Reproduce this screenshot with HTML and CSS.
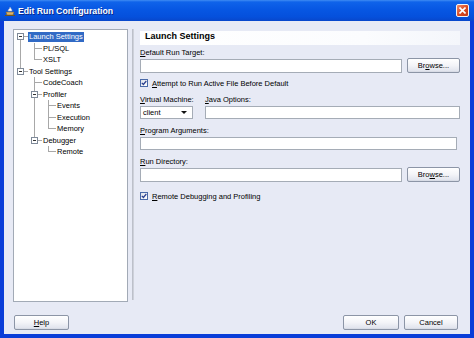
FILE: index.html
```html
<!DOCTYPE html>
<html>
<head>
    <title>Edit Run Configuration</title>
    <link rel="stylesheet" href="styles.css">
</head>
<body>
    <div class="window">
        <div class="titlebar">
            <svg class="app-icon" width="12" height="12" viewBox="0 0 12 12">
                <path d="M2 7 L10 7 L9 10 L3 10 Z" fill="#d9b36a" stroke="#8a6a2c" stroke-width="0.6"/>
                <path d="M4 6 C4 4 6 4 6 2 C7 4 8 4 8 6 Z" fill="#ffffff" stroke="#9aa7c0" stroke-width="0.5"/>
                <rect x="1" y="10" width="10" height="1" fill="#6d5320"/>
            </svg>
            <span class="title">Edit Run Configuration</span>
            <span class="close-btn">
                <svg width="7" height="7" viewBox="0 0 7 7"><path d="M0.5 0.5 L6.5 6.5 M6.5 0.5 L0.5 6.5" stroke="#fff" stroke-width="1.6"/></svg>
            </span>
        </div>
        <div class="frame">
            <div class="main">
                <div class="tree">
                    <ul>
                        <li>
                            <div class="row"><span class="exp"></span><span class="label selected">Launch Settings</span></div>
                            <ul>
                                <li><div class="row"><span class="label">PL/SQL</span></div></li>
                                <li><div class="row"><span class="label">XSLT</span></div></li>
                            </ul>
                        </li>
                        <li>
                            <div class="row"><span class="exp"></span><span class="label">Tool Settings</span></div>
                            <ul>
                                <li><div class="row"><span class="label">CodeCoach</span></div></li>
                                <li>
                                    <div class="row"><span class="exp"></span><span class="label">Profiler</span></div>
                                    <ul>
                                        <li><div class="row"><span class="label">Events</span></div></li>
                                        <li><div class="row"><span class="label">Execution</span></div></li>
                                        <li><div class="row"><span class="label">Memory</span></div></li>
                                    </ul>
                                </li>
                                <li>
                                    <div class="row"><span class="exp"></span><span class="label">Debugger</span></div>
                                    <ul>
                                        <li><div class="row"><span class="label">Remote</span></div></li>
                                    </ul>
                                </li>
                            </ul>
                        </li>
                    </ul>
                </div>
                <div class="splitter"></div>
                <div class="content">
                    <div class="panel-header">Launch Settings</div>

                    <div class="field-label first"><u>D</u>efault Run Target:</div>
                    <div class="field-row">
                        <div class="input grow"></div>
                        <div class="btn browse">Br<u>o</u>wse...</div>
                    </div>

                    <div class="check-row">
                        <span class="check"><svg width="6" height="6" viewBox="0 0 6 6"><path d="M0.8 2.8 L2.4 4.5 L5.3 1" fill="none" stroke="#2a3f8f" stroke-width="1.2"/></svg></span>
                        <span><u>A</u>ttempt to Run Active File Before Default</span>
                    </div>

                    <div class="vm-labels">
                        <div class="field-label vm-col"><u>V</u>irtual Machine:</div>
                        <div class="field-label"><u>J</u>ava Options:</div>
                    </div>
                    <div class="field-row short">
                        <div class="select vm-col">client<span class="arrow"></span></div>
                        <div class="input grow"></div>
                    </div>

                    <div class="field-label"><u>P</u>rogram Arguments:</div>
                    <div class="field-row short">
                        <div class="input grow args"></div>
                    </div>

                    <div class="field-label"><u>R</u>un Directory:</div>
                    <div class="field-row">
                        <div class="input grow"></div>
                        <div class="btn browse">Bro<u>w</u>se...</div>
                    </div>

                    <div class="check-row last">
                        <span class="check"><svg width="6" height="6" viewBox="0 0 6 6"><path d="M0.8 2.8 L2.4 4.5 L5.3 1" fill="none" stroke="#2a3f8f" stroke-width="1.2"/></svg></span>
                        <span><u>R</u>emote Debugging and Profiling</span>
                    </div>
                </div>
            </div>
            <div class="footer">
                <div class="btn help"><u>H</u>elp</div>
                <div class="spacer"></div>
                <div class="btn ok">OK</div>
                <div class="btn cancel">Cancel</div>
            </div>
        </div>
    </div>
</body>
</html>
```

FILE: styles.css
```css
body {
    margin: 0;
    padding: 0;
    font: 7.5px "Liberation Sans", Arial, sans-serif;
    color: #000;
}
.window {
    width: 474px;
    height: 338px;
    display: flex;
    flex-direction: column;
    background: #0a3dd8;
}
.titlebar {
    height: 21px;
    display: flex;
    align-items: center;
    padding: 0 5px 0 4px;
    background: linear-gradient(#3f8cf3 0, #0f63ea 2px, #0757e3 45%, #0550dc 80%, #0847cb 100%);
    box-sizing: border-box;
}
.app-icon {
    margin-right: 2px;
}
.title {
    flex: 1;
    color: #fff;
    font: bold 8.7px "Liberation Sans", Arial, sans-serif;
    text-shadow: 1px 1px 0 #0a2a8a;
}
.close-btn {
    width: 13px;
    height: 13px;
    box-sizing: border-box;
    border: 1px solid #f3f3f3;
    border-radius: 2px;
    background: linear-gradient(135deg, #f08a6c, #d9481f 55%, #c2391a);
    display: flex;
    align-items: center;
    justify-content: center;
}
.frame {
    flex: 1;
    margin: 0 4px 4px 4px;
    background: #e7eaf5;
    display: flex;
    flex-direction: column;
}
.main {
    flex: 1;
    display: flex;
    padding-top: 8px;
}
.tree {
    width: 115px;
    margin-left: 9px;
    box-sizing: border-box;
    background: #fff;
    border: 1px solid #a2aab6;
    padding-top: 1px;
    color: #000;
}
.tree ul {
    list-style: none;
    margin: 0;
    padding: 0 0 0 14px;
}
.tree > ul {
    padding-left: 0;
}
.tree li {
    position: relative;
}
.tree li::before {
    content: "";
    position: absolute;
    left: 6px;
    top: 5px;
    width: 8px;
    border-top: 1px solid #a8a8a8;
}
.tree li::after {
    content: "";
    position: absolute;
    left: 6px;
    top: 0;
    bottom: 0;
    border-left: 1px solid #a8a8a8;
}
.tree li:last-child::after {
    bottom: auto;
    height: 6px;
}
.tree > ul > li:first-child::after {
    top: 6px;
    bottom: 0;
    height: auto;
}
.row {
    height: 11.5px;
    display: flex;
    align-items: center;
    padding-left: 14px;
    position: relative;
    z-index: 1;
}
.label {
    padding: 0 1px;
    line-height: 9.5px;
    white-space: nowrap;
}
.label.selected {
    background: #316ac5;
    color: #fff;
}
.exp {
    position: absolute;
    left: 3px;
    top: 2px;
    width: 7px;
    height: 7px;
    box-sizing: border-box;
    border: 1px solid #7f8a99;
    background: #fff;
}
.exp::after {
    content: "";
    position: absolute;
    left: 1px;
    top: 2px;
    width: 3px;
    border-top: 1px solid #333;
}
.splitter {
    width: 2px;
    margin: 0 0 2px 4px;
    background: linear-gradient(90deg, #b4b8c2, #d6d9e2);
}
.content {
    width: 320px;
    margin-left: 6px;
    padding-top: 2px;
    display: flex;
    flex-direction: column;
}
.panel-header {
    height: 14px;
    line-height: 14px;
    padding-left: 5px;
    font: bold 9px "Liberation Sans", Arial, sans-serif;
    background: linear-gradient(90deg, #ffffff, #fbfcfe 70%, #f4f6fb);
}
.field-label {
    height: 10px;
    line-height: 10px;
    margin-top: 7px;
    white-space: nowrap;
}
.field-label.first {
    margin-top: 3px;
}
.field-row {
    height: 15px;
    display: flex;
    align-items: center;
    gap: 5px;
}
.field-row.short {
    height: 14px;
    gap: 12px;
}
.vm-labels {
    display: flex;
    gap: 12px;
}
.vm-labels .field-label {
    margin-top: 6px;
}
.vm-col {
    width: 53px;
    flex: none;
}
.input {
    height: 14px;
    box-sizing: border-box;
    background: #fff;
    border: 1px solid #a5acb6;
}
.field-row.short .input {
    height: 13px;
}
.grow {
    flex: 1;
}
.input.args {
    margin-right: 3px;
}
.select {
    height: 13px;
    box-sizing: border-box;
    background: #fff;
    border: 1px solid #a5acb6;
    display: flex;
    align-items: center;
    padding-left: 2px;
    position: relative;
}
.arrow {
    position: absolute;
    right: 5px;
    top: 4px;
    border-left: 3px solid transparent;
    border-right: 3px solid transparent;
    border-top: 3px solid #111;
}
.check-row {
    height: 12px;
    display: flex;
    align-items: center;
    gap: 4px;
    margin-top: 4px;
}
.check-row.last {
    margin-top: 8px;
}
.check {
    width: 8px;
    height: 8px;
    box-sizing: border-box;
    border: 1px solid #4a6aa8;
    background: linear-gradient(135deg, #dfe3ea, #fff);
    display: flex;
    align-items: center;
    justify-content: center;
}
.btn {
    height: 15px;
    box-sizing: border-box;
    border: 1px solid #8c95a6;
    border-radius: 2px;
    background: linear-gradient(#ffffff, #f3f4f8 50%, #e2e5ee 90%, #d3d7e1);
    display: flex;
    align-items: center;
    justify-content: center;
}
.browse {
    width: 53px;
    flex: none;
}
.footer {
    height: 32px;
    display: flex;
    align-items: flex-start;
    padding: 13px 12px 0 10px;
    box-sizing: border-box;
    gap: 5px;
}
.spacer {
    flex: 1;
}
.help {
    width: 55px;
}
.ok {
    width: 56px;
}
.cancel {
    width: 54px;
}
```
